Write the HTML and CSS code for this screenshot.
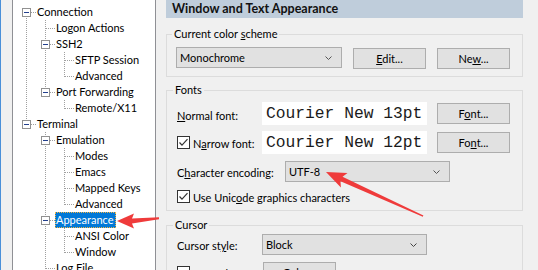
FILE: index.html
```html
<!DOCTYPE html>
<html lang="en">

<head>
    <meta charset="UTF-8">
    <title>Session Options</title>
    <link rel="stylesheet" href="styles.css">
</head>

<body>
    <div class="dialog">
        <div class="tree">
            <div class="node"><span class="c first"><i class="box"></i></span><span class="label">Connection</span></div>
            <div class="node"><span class="g v"></span><span class="c mid"></span><span class="label">Logon Actions</span></div>
            <div class="node"><span class="g v"></span><span class="c mid"><i class="box"></i></span><span class="label">SSH2</span></div>
            <div class="node"><span class="g v"></span><span class="g v"></span><span class="c mid"></span><span class="label">SFTP Session</span></div>
            <div class="node"><span class="g v"></span><span class="g v"></span><span class="c end"></span><span class="label">Advanced</span></div>
            <div class="node"><span class="g v"></span><span class="c end"><i class="box"></i></span><span class="label">Port Forwarding</span></div>
            <div class="node"><span class="g v"></span><span class="g"></span><span class="c end"></span><span class="label">Remote/X11</span></div>
            <div class="node"><span class="c end"><i class="box"></i></span><span class="label">Terminal</span></div>
            <div class="node"><span class="g"></span><span class="c mid"><i class="box"></i></span><span class="label">Emulation</span></div>
            <div class="node"><span class="g"></span><span class="g v"></span><span class="c mid"></span><span class="label">Modes</span></div>
            <div class="node"><span class="g"></span><span class="g v"></span><span class="c mid"></span><span class="label">Emacs</span></div>
            <div class="node"><span class="g"></span><span class="g v"></span><span class="c mid"></span><span class="label">Mapped Keys</span></div>
            <div class="node"><span class="g"></span><span class="g v"></span><span class="c end"></span><span class="label">Advanced</span></div>
            <div class="node"><span class="g"></span><span class="c mid"><i class="box"></i></span><span class="label sel">Appearance</span></div>
            <div class="node"><span class="g"></span><span class="g v"></span><span class="c mid"></span><span class="label">ANSI Color</span></div>
            <div class="node"><span class="g"></span><span class="g v"></span><span class="c end"></span><span class="label">Window</span></div>
            <div class="node"><span class="g"></span><span class="c mid"></span><span class="label">Log File</span></div>
        </div>

        <div class="panel">
            <div class="title">Window and Text Appearance</div>

            <fieldset class="grp scheme">
                <legend>Current color <u>s</u>cheme</legend>
                <div class="row">
                    <div class="select wide">Monochrome<svg width="7" height="4" viewBox="0 0 7 4"><path d="M0.5 0.5 L3.5 3.5 L6.5 0.5" fill="none" stroke="#555" /></svg></div>
                    <div class="btn"><span><u>E</u>dit...</span></div>
                    <div class="btn"><span>Ne<u>w</u>...</span></div>
                </div>
            </fieldset>

            <fieldset class="grp fonts">
                <legend>Fonts</legend>
                <div class="frow">
                    <span class="flabel"><u>N</u>ormal font:</span>
                    <div class="preview">Courier New 13pt</div>
                    <div class="btn"><span>F<u>o</u>nt...</span></div>
                </div>
                <div class="frow">
                    <span class="flabel check"><svg width="13" height="13" viewBox="0 0 13 13"><rect x="0.5" y="0.5" width="12" height="12" fill="#fff" stroke="#333" /><path d="M2.5 6.5 L5 9.2 L10.5 3.2" fill="none" stroke="#333" stroke-width="1.2" /></svg><span>N<u>a</u>rrow font:</span></span>
                    <div class="preview">Courier New 12pt</div>
                    <div class="btn"><span>Fo<u>n</u>t...</span></div>
                </div>
                <div class="frow enc">
                    <span class="flabel">C<u>h</u>aracter encoding:</span>
                    <div class="select">UTF-8<svg width="7" height="4" viewBox="0 0 7 4"><path d="M0.5 0.5 L3.5 3.5 L6.5 0.5" fill="none" stroke="#555" /></svg></div>
                </div>
                <div class="frow last">
                    <span class="check"><svg width="13" height="13" viewBox="0 0 13 13"><rect x="0.5" y="0.5" width="12" height="12" fill="#fff" stroke="#333" /><path d="M2.5 6.5 L5 9.2 L10.5 3.2" fill="none" stroke="#333" stroke-width="1.2" /></svg><span>Use Unic<u>o</u>de graphics characters</span></span>
                </div>
            </fieldset>

            <fieldset class="grp cursor">
                <legend>Cursor</legend>
                <div class="frow">
                    <span class="flabel">Cursor st<u>y</u>le:</span>
                    <div class="select">Block<svg width="7" height="4" viewBox="0 0 7 4"><path d="M0.5 0.5 L3.5 3.5 L6.5 0.5" fill="none" stroke="#444" /></svg></div>
                </div>
                <div class="frow">
                    <span class="flabel check"><svg width="13" height="13" viewBox="0 0 13 13"><rect x="0.5" y="0.5" width="12" height="12" fill="#fff" stroke="#333" /></svg><span>Use color:</span></span>
                    <div class="btn"><span><u>C</u>olor...</span></div>
                </div>
            </fieldset>
        </div>

        <!-- red annotation arrows drawn over the dialog -->
        <svg class="marks" width="538" height="270" viewBox="0 0 538 270">
            <polygon points="116,221 133,213.5 131,218.6 158,217.3 158,219.2 131,223.4 133,228.5" fill="#ef3b3b" />
            <polygon points="325,172 346.5,173 341.5,176.7 422.4,215.4 421.8,216.8 339.5,181.3 339.9,187.6" fill="#ef3b3b" />
        </svg>
    </div>
</body>

</html>
```
FILE: styles.css
```css
* {
    margin: 0;
    padding: 0;
    box-sizing: border-box;
}

body {
    background: #f0f0f0;
}

.dialog {
    position: relative;
    display: flex;
    align-items: flex-start;
    width: 538px;
    height: 270px;
    overflow: hidden;
    padding-left: 11px;
    border-left: 1px solid #4a90d9;
    background: #f0f0f0;
    font-family: Lato, "Liberation Sans", sans-serif;
    font-size: 11px;
    color: #000;
}

/* tree view */
.tree {
    flex: none;
    width: 144px;
    height: 270px;
    margin-right: 10px;
    padding: 4px 0 0 4px;
    background: #fff;
    border-left: 1px solid #8f9095;
    border-right: 1px solid #8f9095;
}

.node {
    display: flex;
    height: 16px;
}

.g,
.c {
    flex: none;
    width: 19px;
    height: 16px;
}

.g.v {
    background: repeating-linear-gradient(to bottom, #a0a0a0 0 1px, transparent 1px 2px) 9px 0 / 1px 16px no-repeat;
}

.c {
    display: flex;
    align-items: flex-start;
}

.c.mid {
    background:
        repeating-linear-gradient(to bottom, #a0a0a0 0 1px, transparent 1px 2px) 9px 0 / 1px 16px no-repeat,
        repeating-linear-gradient(to right, #a0a0a0 0 1px, transparent 1px 2px) 10px 8px / 9px 1px no-repeat;
}

.c.end {
    background:
        repeating-linear-gradient(to bottom, #a0a0a0 0 1px, transparent 1px 2px) 9px 0 / 1px 9px no-repeat,
        repeating-linear-gradient(to right, #a0a0a0 0 1px, transparent 1px 2px) 10px 8px / 9px 1px no-repeat;
}

.c.first {
    background:
        repeating-linear-gradient(to bottom, #a0a0a0 0 1px, transparent 1px 2px) 9px 8px / 1px 8px no-repeat,
        repeating-linear-gradient(to right, #a0a0a0 0 1px, transparent 1px 2px) 10px 8px / 9px 1px no-repeat;
}

.box {
    display: flex;
    align-items: center;
    justify-content: center;
    width: 9px;
    height: 9px;
    margin: 4px 0 0 5px;
    border: 1px solid #919191;
    background: #fff;
}

.box::before {
    content: "";
    width: 5px;
    height: 1px;
    background: #23408e;
}

.label {
    height: 16px;
    line-height: 14px;
    padding-right: 1px;
    border: 1px solid transparent;
    white-space: nowrap;
}

.label.sel {
    background: #0078d7;
    color: #fff;
    border: 1px dotted #f2b445;
}

/* right side */
.panel {
    flex: none;
    width: 357px;
}

.title {
    height: 18px;
    line-height: 18px;
    padding-left: 6px;
    background: #bfcddb;
    font-size: 12.5px;
    font-weight: bold;
    color: #111;
}

.grp {
    min-width: 0;
    margin-top: 5px;
    padding: 4px 11px 6px 10px;
    border: 1px solid #dcdcdc;
}

.grp legend {
    margin-left: -4px;
    padding: 0 2px;
    line-height: 16px;
}

.scheme {
    margin-top: 8px;
    padding: 5px 11px 7px 9px;
}

.cursor {
    margin-top: 6px;
    padding-top: 1px;
}

.row {
    display: flex;
    align-items: flex-start;
    height: 22px;
}

.row .btn {
    margin-top: 1px;
}

.select {
    display: flex;
    align-items: center;
    justify-content: space-between;
    flex: none;
    width: 165px;
    height: 21px;
    padding: 0 9px 0 3px;
    border: 1px solid #adadad;
    background: #e1e1e1;
}

.select.wide {
    width: 166px;
}

.btn {
    display: flex;
    align-items: center;
    justify-content: center;
    flex: none;
    width: 73px;
    height: 21px;
    margin-left: 11px;
    border: 1px solid #adadad;
    background: #e1e1e1;
}

.frow {
    display: flex;
    align-items: center;
    height: 23px;
    margin-top: 6px;
}

.frow:first-of-type {
    margin-top: 0;
}

.frow.enc {
    height: 21px;
    margin-top: 7px;
}

.frow.last {
    height: 16px;
}

.cursor .frow {
    height: 21px;
    margin-top: 7px;
}

.cursor .frow:first-of-type {
    margin-top: 0;
}

.cursor .btn {
    margin-left: 1px;
}

.flabel {
    flex: none;
    width: 85px;
    padding-top: 4px;
    white-space: nowrap;
}

.enc .flabel {
    width: 108px;
    padding-top: 2px;
}

.cursor .flabel {
    padding-top: 2px;
}

.check {
    display: flex;
    align-items: center;
    gap: 3px;
    white-space: nowrap;
}

.flabel.check {
    padding-top: 0;
}

.check span {
    padding-top: 2px;
}

.preview {
    flex: none;
    width: 165px;
    height: 23px;
    padding-left: 4px;
    background: #fff;
    font-family: "Liberation Mono", monospace;
    font-size: 16.3px;
    line-height: 23px;
    color: #1a1a1a;
    white-space: nowrap;
}

.preview + .btn {
    margin-left: 10px;
}

.marks {
    position: absolute;
    top: 0;
    left: 0;
    pointer-events: none;
}
```
